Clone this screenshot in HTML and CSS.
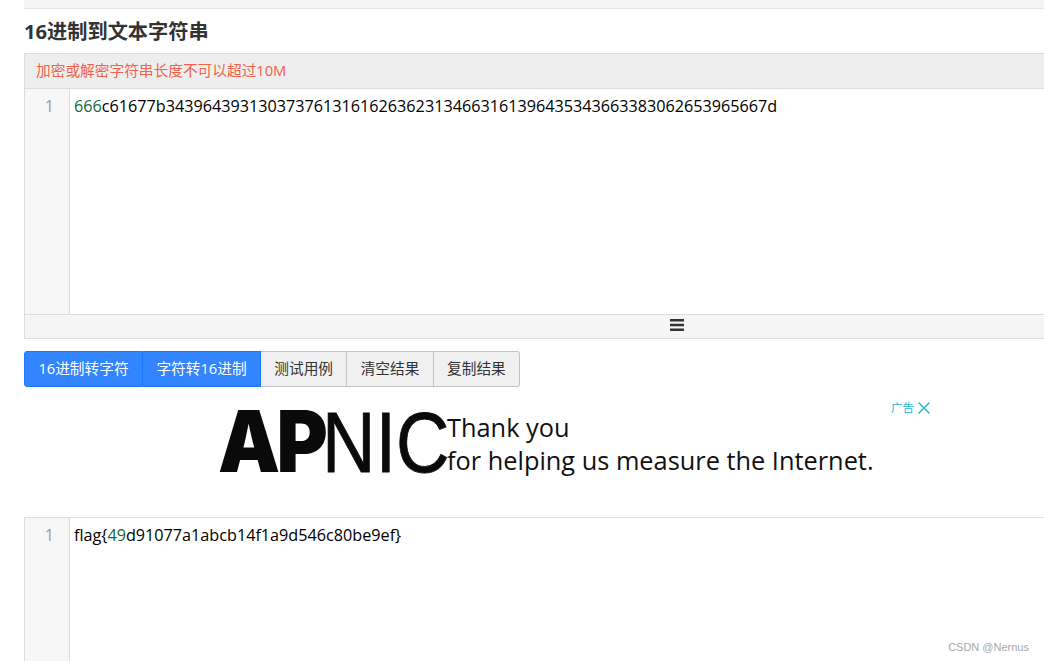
FILE: index.html
```html
<!DOCTYPE html>
<html lang="zh-CN">
<head>
<meta charset="utf-8">
<title>16进制到文本字符串</title>
<link rel="stylesheet" href="styles.css">
</head>
<body>
<main class="page">
  <div class="top-strip"></div>
  <h1 class="title">16进制到文本字符串</h1>
  <section class="panel">
    <div class="notice">加密或解密字符串长度不可以超过10M</div>
    <div class="editor editor-input">
      <div class="gutter">1</div>
      <div class="code"><span class="num">666</span>c61677b34396439313037376131616263623134663161396435343663383062653965667d</div>
    </div>
    <div class="resize">
      <svg class="bars" width="14" height="12" viewBox="0 0 14 12" aria-hidden="true"><path d="M0 0h14v2.400H0zM0 4.800h14v2.400H0zM0 9.600h14v2.400H0z" fill="#333"/></svg>
    </div>
  </section>
  <div class="btn-group">
    <button class="btn primary">16进制转字符</button>
    <button class="btn primary">字符转16进制</button>
    <button class="btn">测试用例</button>
    <button class="btn">清空结果</button>
    <button class="btn">复制结果</button>
  </div>
  <aside class="ad">
    <div class="logo"><span class="logo-bold">AP</span><span class="logo-thin">NIC</span></div>
    <div class="ad-text">Thank you<br>for helping us measure the Internet.</div>
    <div class="ad-mark">广告<svg width="14" height="14" viewBox="0 0 14 14" aria-hidden="true"><path d="M1.500 1.500l11 11M12.500 1.500l-11 11" stroke="#1ab7d6" stroke-width="1.400" fill="none"/></svg></div>
  </aside>
  <section class="editor editor-output">
    <div class="gutter">1</div>
    <div class="code">flag{<span class="num">49</span>d91077a1abcb14f1a9d546c80be9ef}</div>
  </section>
</main>
<div class="watermark">CSDN @Nernus</div>
</body>
</html>
```
FILE: styles.css
```css
html, body {
  margin: 0;
  height: 661px;
  overflow: hidden;
  background: #fff;
}
body {
  position: relative;
  font-family: "Open Sans", "Noto Sans CJK SC", sans-serif;
  color: #333;
}
.page {
  width: 1020px;
  padding-left: 24px;
}
.top-strip {
  height: 8px;
  background: #f5f5f5;
  border-bottom: 1px solid #e6e6e6;
}
.title {
  margin: 0;
  height: 44px;
  font-size: 20.200px;
  line-height: 44px;
  font-weight: 700;
  color: #333;
}
.panel {
  border: 1px solid #ddd;
  border-right: 0;
}
.notice {
  height: 34px;
  line-height: 32px;
  padding-left: 11px;
  font-size: 14.700px;
  color: #f0634c;
  background: #eee;
  border-bottom: 1px solid #ddd;
}
.editor {
  display: flex;
  background: #fff;
}
.editor-input {
  height: 225px;
}
.gutter {
  flex: none;
  width: 45px;
  padding-left: 5px;
  box-sizing: border-box;
  background: #f7f7f7;
  border-right: 1px solid #ddd;
  color: #999;
  font-size: 16.200px;
  line-height: 34px;
  text-align: center;
}
.code {
  padding-left: 4px;
  font-size: 16.200px;
  line-height: 34px;
  color: #000;
  white-space: nowrap;
}
.num {
  color: #116644;
}
.resize {
  box-sizing: border-box;
  width: 1019px;
  height: 24px;
  padding: 0 0 3px 285px;
  display: flex;
  align-items: center;
  justify-content: center;
  background: #f5f5f5;
  border-top: 1px solid #ddd;
}
.bars { display: block; }
.btn-group {
  display: flex;
  margin-top: 12px;
  height: 36px;
}
.btn {
  height: 36px;
  margin: 0;
  padding: 0 13.300px 2px;
  font: 14.700px/32px "Open Sans", "Noto Sans CJK SC", sans-serif;
  color: #333;
  background: #f0f0f0;
  border: 1px solid #c2c2c2;
  border-left-width: 0;
  cursor: pointer;
}
.btn:last-child {
  border-radius: 0 3px 3px 0;
}
.btn.primary {
  color: #fff;
  background: #3385ff;
  border-color: #1e78ff;
  width: 118px;
  padding: 0 0 2px;
}
.btn.primary:first-child {
  width: 119px;
  border-left-width: 1px;
  border-radius: 3px 0 0 3px;
}
.ad {
  position: relative;
  height: 130px;
  display: flex;
  align-items: flex-start;
  padding-left: 196px;
}
.logo {
  flex: none;
  position: relative;
  width: 227px;
  height: 100px;
  color: #0a0a0a;
  white-space: nowrap;
}
.logo-bold, .logo-thin {
  position: absolute;
  top: 5px;
  line-height: 100px;
  transform-origin: left center;
}
.logo-bold {
  left: -2px;
  font-family: Inter, sans-serif;
  font-size: 85px;
  font-weight: 900;
  letter-spacing: -4px;
  transform: scaleX(0.92);
}
.logo-thin {
  left: 102px;
  font-family: "Liberation Sans", sans-serif;
  font-size: 86px;
  font-weight: 400;
  -webkit-text-stroke: 0.8px #0a0a0a;
  transform: scaleX(0.86);
}
.ad-text {
  margin-top: 24px;
  font-size: 25.350px;
  line-height: 33px;
  color: #111;
  white-space: nowrap;
}
.ad-mark {
  position: absolute;
  left: 867px;
  top: 13px;
  display: flex;
  align-items: center;
  gap: 3px;
  font-size: 11.500px;
  line-height: 16px;
  color: #1ab7d6;
}
.editor-output {
  height: 144px;
  border: 1px solid #ddd;
  border-right: 0;
  border-bottom: 0;
}
.watermark {
  position: absolute;
  right: 15px;
  top: 640px;
  font: 11px/14px "Liberation Sans", sans-serif;
  color: #a8a8a8;
}
```
